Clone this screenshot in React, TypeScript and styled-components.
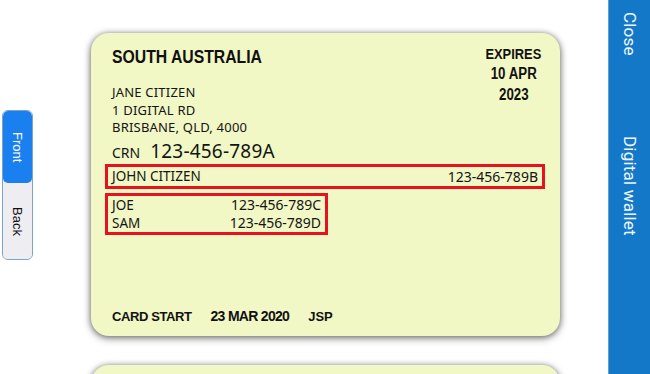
import React from "react";
import styled, { createGlobalStyle } from "styled-components";

const Global = createGlobalStyle`
  html, body { margin: 0; padding: 0; background: #ffffff; }
  body { width: 650px; height: 374px; overflow: hidden; }
  * { box-sizing: border-box; }
`;

const Layout = styled.div`
  display: flex;
  width: 650px;
  height: 374px;
  overflow: hidden;
`;

const LeftRail = styled.div`
  width: 91px;
  flex: none;
  padding: 110px 0 0 2px;
`;

const Toggle = styled.div`
  width: 31px;
  height: 150px;
  border: 1px solid #7ea3c8;
  border-radius: 6px;
  overflow: hidden;
  display: flex;
  flex-direction: column;
  background: #eeedf2;
`;

const ToggleItem = styled.div<{ $active?: boolean }>`
  height: ${(p) => (p.$active ? "72px" : "auto")};
  flex: ${(p) => (p.$active ? "none" : "1")};
  background: ${(p) => (p.$active ? "#1a80f0" : "#eeedf2")};
  color: ${(p) => (p.$active ? "#ffffff" : "#111111")};
  border-radius: ${(p) => (p.$active ? "5px" : "0")};
  display: flex;
  align-items: center;
  justify-content: center;
  font-family: "Liberation Sans", Arial, sans-serif;
  font-size: 13px;
`;

const Vertical = styled.span`
  writing-mode: vertical-rl;
`;

const Main = styled.div`
  flex: 1;
  display: flex;
  flex-direction: column;
  gap: 29px;
  padding-top: 33px;
`;

const Card = styled.div`
  width: 469px;
  height: 303px;
  flex: none;
  border-radius: 18px;
  background: #f1f7c5;
  box-shadow: 0 1px 6px rgba(0, 0, 0, 0.55), 0 3px 10px rgba(0, 0, 0, 0.2);
  padding: 14px 14px 0 14px;
  display: flex;
  flex-direction: column;
  color: #111;
`;

const TopSection = styled.div`
  display: flex;
  justify-content: space-between;
  align-items: flex-start;
`;

const LeftCol = styled.div`
  display: flex;
  flex-direction: column;
  padding-left: 7px;
`;

const Heading = styled.div`
  font-family: "Liberation Sans", Arial, sans-serif;
  font-weight: 700;
  font-size: 18px;
  line-height: 20px;
  transform: scaleX(0.875);
  transform-origin: left center;
  white-space: nowrap;
`;

const Expiry = styled.div`
  display: flex;
  flex-direction: column;
  align-items: center;
  font-family: "Liberation Sans", Arial, sans-serif;
  font-weight: 700;
  margin-right: 2px;
  margin-top: -2px;
`;

const ExpLabel = styled.div`
  font-size: 14px;
  line-height: 18px;
  transform: scaleX(0.92);
`;

const ExpValue = styled.div`
  font-size: 16px;
  line-height: 21px;
  transform: scaleX(0.83);
`;

const Address = styled.div`
  margin-top: 17px;
  font-family: "Noto Sans", "Open Sans", sans-serif;
  font-size: 13px;
  letter-spacing: 0.2px;
  line-height: 17.5px;
  color: #141414;
`;

const CrnRow = styled.div`
  display: flex;
  align-items: baseline;
  gap: 10px;
  height: 24px;
  margin-top: 2.5px;
  font-family: "Noto Sans", "Open Sans", sans-serif;
  color: #141414;
  line-height: 24px;
`;

const CrnLabel = styled.span`
  font-size: 14px;
`;

const CrnValue = styled.span`
  font-size: 19px;
  letter-spacing: 0.2px;
`;

const Boxes = styled.div`
  display: flex;
  flex-direction: column;
  gap: 4px;
  margin-top: 1px;
`;

const Box = styled.div<{ $w: number; $lh: number }>`
  width: ${(p) => p.$w}px;
  border: 3px solid #e8121f;
  padding: 0 4px;
  font-family: "Noto Sans", "Open Sans", sans-serif;
  font-size: 13.5px;
  line-height: ${(p) => p.$lh}px;
  color: #141414;
`;

const Line = styled.div`
  display: flex;
  justify-content: space-between;
`;

const Num = styled.span`
  font-size: 14px;
`;

const Footer = styled.div`
  margin-top: auto;
  margin-bottom: 12px;
  padding-left: 7px;
  display: flex;
  gap: 19px;
  align-items: baseline;
  font-family: "Liberation Sans", Arial, sans-serif;
  font-weight: 700;
`;

const FootLabel = styled.span<{ $size: number; $ls: number }>`
  font-size: ${(p) => p.$size}px;
  letter-spacing: ${(p) => p.$ls}px;
`;

const Sidebar = styled.div`
  width: 42px;
  flex: none;
  background: #1478c8;
  border-left: 1px solid #5fa0d8;
  display: flex;
  flex-direction: column;
  align-items: center;
  color: #eef6ff;
  font-family: Roboto, "Liberation Sans", sans-serif;
  font-size: 17px;
`;

const SideItem = styled.div<{ $top: number }>`
  margin-top: ${(p) => p.$top}px;
  writing-mode: vertical-rl;
  line-height: 20px;
  letter-spacing: 0.2px;
`;

export default function App() {
  return (
    <>
      <Global />
      <Layout>
        <LeftRail>
          <Toggle>
            <ToggleItem $active>
              <Vertical>Front</Vertical>
            </ToggleItem>
            <ToggleItem>
              <Vertical>Back</Vertical>
            </ToggleItem>
          </Toggle>
        </LeftRail>
        <Main>
          <Card>
            <TopSection>
              <LeftCol>
                <Heading>SOUTH AUSTRALIA</Heading>
                <Address>
                  <div>JANE CITIZEN</div>
                  <div>1 DIGITAL RD</div>
                  <div>BRISBANE, QLD, 4000</div>
                </Address>
                <CrnRow>
                  <CrnLabel>CRN</CrnLabel>
                  <CrnValue>123-456-789A</CrnValue>
                </CrnRow>
              </LeftCol>
              <Expiry>
                <ExpLabel>EXPIRES</ExpLabel>
                <ExpValue>10 APR</ExpValue>
                <ExpValue>2023</ExpValue>
              </Expiry>
            </TopSection>
            <Boxes>
              <Box $w={440} $lh={19}>
                <Line>
                  <span>JOHN CITIZEN</span>
                  <Num>123-456-789B</Num>
                </Line>
              </Box>
              <Box $w={223} $lh={18}>
                <Line>
                  <span>JOE</span>
                  <Num>123-456-789C</Num>
                </Line>
                <Line>
                  <span>SAM</span>
                  <Num>123-456-789D</Num>
                </Line>
              </Box>
            </Boxes>
            <Footer>
              <FootLabel $size={13} $ls={-0.4}>CARD START</FootLabel>
              <FootLabel $size={14} $ls={-0.7}>23 MAR 2020</FootLabel>
              <FootLabel $size={13} $ls={0}>JSP</FootLabel>
            </Footer>
          </Card>
          <Card />
        </Main>
        <Sidebar>
          <SideItem $top={12}>Close</SideItem>
          <SideItem $top={80}>Digital wallet</SideItem>
        </Sidebar>
      </Layout>
    </>
  );
}
